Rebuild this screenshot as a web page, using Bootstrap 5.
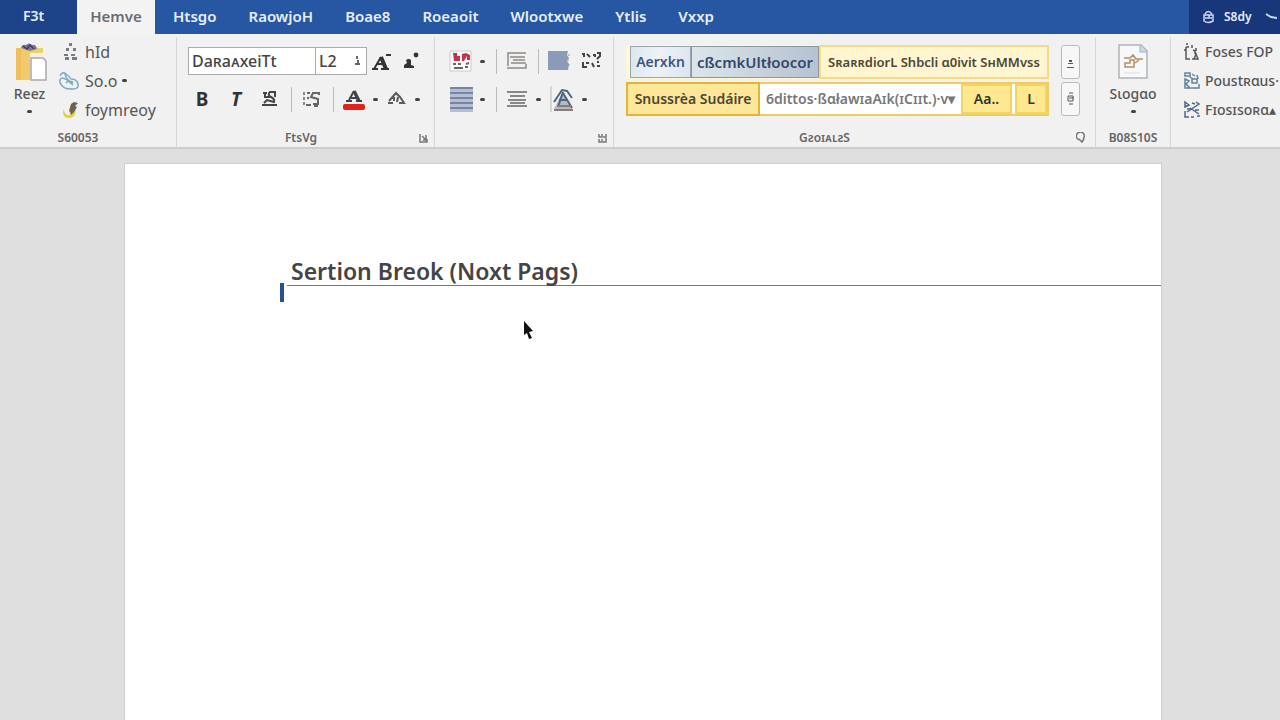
<!DOCTYPE html>
<html lang="en">
<head>
<meta charset="utf-8">
<meta name="viewport" content="width=device-width, initial-scale=1">
<title>Document editor</title>
<link href="https://cdn.jsdelivr.net/npm/bootstrap@5.3.0/dist/css/bootstrap.min.css" rel="stylesheet">
<style>
  body { font-family: "Noto Sans", "Open Sans", sans-serif; font-size: 14px; line-height: 20px; color: #555; background: #dfdfdf; }
  button { font: inherit; color: inherit; background: none; border: 0; padding: 0; white-space: nowrap; }
  svg { display: block; flex: none; }
  .tab-bar { background: #2757a3; height: 34px; color: #e6eefb; font-weight: 600; }
  .tab-item { padding: 0 16px; height: 34px; font-size: 15px; line-height: 32px; color: inherit; text-decoration: none; white-space: nowrap; }
  .tab-file { background: #1d4488; width: 77px; padding-left: 23px; font-size: 14px; }
  .tab-home { background: #f3f3f3; color: #686c75; width: 78px; padding: 0; text-align: center; margin-right: 2px; }
  .account { background: #18377b; width: 91px; padding: 0 13px; gap: 9px; font-size: 12px; }
  .ribbon { background: #f1f1f1; height: 115px; border-bottom: 2px solid #cdcdcd; }
  .tool-group { flex: none; border-right: 1px solid #d6d6d6; margin: 3px 0 0; }
  .group-body { height: 92px; }
  .group-tools { padding-top: 5px; }
  .group-name { font-size: 12px; font-weight: 600; line-height: 18px; color: #666; text-align: center; }
  .group-name span { flex: 1; }
  .launcher { width: 20px; height: 18px; display: flex; align-items: center; justify-content: center; }
  .g-clip { width: 177px; }
  .g-font { width: 258px; padding-left: 11px; }
  .g-para { width: 179px; padding-left: 12px; }
  .g-styles { flex: 1; min-width: 482px; padding-left: 12px; }
  .g-source { width: 75px; }
  .g-edit { width: 109px; padding-left: 12px; overflow: hidden; border: 0; }
  .big-tool { display: flex; flex-direction: column; align-items: center; align-self: flex-start; padding-top: 5px; line-height: 24px; font-weight: 500; }
  .g-clip .big-tool { width: 59px; }
  .line-tool { display: flex; align-items: center; height: 29px; gap: 5px; font-size: 16px; }
  .g-edit .line-tool { font-size: 14px; font-weight: 500; gap: 4px; }
  .tool-row { height: 38px; display: flex; align-items: center; }
  .tool { width: 28px; height: 28px; display: flex; align-items: center; justify-content: center; font-size: 19px; color: #333; }
  .more { width: 14px; height: 28px; display: flex; align-items: center; justify-content: center; }
  .more::before, .drop::before { content: ""; width: 5px; height: 3px; border-radius: 2px; background: #444; }
  .rule-v { width: 14px; height: 25px; display: flex; justify-content: center; }
  .rule-v::before { content: ""; width: 1px; background: #bbb; }
  .combo { border: 1px solid #aaa; background: #fff; height: 28px; width: 179px; }
  .combo input { border: 0; background: none; outline: 0; padding: 0 3px; color: #444; min-width: 0; height: 26px; font-size: 16px; font-weight: 500; }
  .combo .font-name { width: 127px; border-right: 1px solid #aaa; }
  .combo .font-size { width: 38px; }
  .gallery { flex: 1; min-width: 423px; color: #4c4636; font-weight: 600; }
  .gallery-row { height: 34px; background: #fff7d5; }
  .gallery-row button { overflow: hidden; }
  .style-blue { border: 1px solid #98a5af; background: linear-gradient(100deg, #dce6ef, #eef2f7 45%, #dce4f0); color: #40577c; width: 61px; height: 32px; }
  .style-slate { border: 1px solid #8b979e; background: linear-gradient(90deg, #dce5ea, #b6c2d1); color: #34486a; width: 128px; height: 32px; font-size: 15px; }
  .style-cream { flex: 1; height: 34px; border: 2px solid #f3db88; background: #fff5cf; }
  .gallery-row .style-cream { font-size: 13px; }
  .gallery-low { border: 2px solid #efcd65; background: #fff; gap: 3px; }
  .style-gold { border: 2px solid #e2b633; background: #ffe79a; }
  .style-active { width: 134px; height: 34px; margin: -2px 0 -2px -2px; }
  .style-white { flex: 1; color: #777; }
  .style-letter { width: 51px; border: 2px solid #f4d35f; background: #ffe890; color: #333; }
  .style-narrow { width: 32px; }
  .scroll-btn { width: 19px; height: 34px; border: 1px solid #bbb; border-radius: 3px; background: #f7f7f7; display: flex; align-items: center; justify-content: center; }
  .workspace { padding: 14px 118px 0 124px; height: calc(100vh - 149px); overflow: hidden; }
  .sheet { background: #fff; border: 1px solid #cfcfcf; border-bottom: 0; min-height: 100%; padding: 93px 0 0 162px; }
  .break-line { border-bottom: 1px solid #777; padding-left: 4px; height: 29px; }
  .break-line h1 { font-size: 23px; line-height: 29px; font-weight: 600; color: #444; margin: 0; }
  .caret { position: absolute; left: -7px; top: 26px; width: 4px; height: 19px; background: #24538f; }
  .pointer { position: absolute; left: 236px; top: 64px; }
</style>
<script src="https://cdn.jsdelivr.net/npm/bootstrap@5.3.0/dist/js/bootstrap.bundle.min.js"></script>
</head>
<body class="overflow-hidden">
<nav class="tab-bar d-flex" aria-label="Ribbon tabs">
  <a class="tab-item tab-file" href="#">F3t</a>
  <a class="tab-item tab-home" href="#" aria-current="page">Hemve</a>
  <a class="tab-item" href="#">Htsgo</a>
  <a class="tab-item" href="#">RaowjoH</a>
  <a class="tab-item" href="#">Boae8</a>
  <a class="tab-item" href="#">Roeaoit</a>
  <a class="tab-item" href="#">Wlootxwe</a>
  <a class="tab-item" href="#">Ytlis</a>
  <a class="tab-item" href="#">Vxxp</a>
  <button class="account d-flex align-items-center ms-auto overflow-hidden">
    <svg width="13" height="14" viewBox="0 0 13 14" fill="none" stroke="#c9d8f2" stroke-width="1.5"><path d="M3 4Q6 -1 10 4M2 5v6q4 3 9 0V5zM3 8h7M7 5v3"/></svg>
    <span>S8dy</span>
    <svg width="16" height="8" viewBox="0 0 16 8" fill="none" stroke="#c9d8f2" stroke-width="2"><path d="M5 1l5 3 6 1"/></svg>
  </button>
</nav>

<header class="ribbon d-flex">
  <section class="tool-group g-clip">
    <div class="group-body d-flex">
      <button class="big-tool">
        <svg width="34" height="40" viewBox="0 0 34 40"><path d="M3 4h28v35H3z" fill="#f6f1df"/><path d="M3 6h14v32H3z" fill="#f3ca6b"/><path d="M3 6h5v32H3z" fill="#eebf5b"/><path d="M16 6h14v5H16z" fill="#e6d36c"/><path d="M8 6q1-4 5-3 3-3 6 0 4-1 5 4l-7 2z" fill="#7d7890"/><path d="M10 4l4 3 3-4 4 4" stroke="#394263" stroke-width="1.5" fill="none"/><path d="M18 16h12l3 3v19H18z" fill="#fff" stroke="#a9a9ae" stroke-width="1.5"/></svg>
        <span>Reez</span><span class="drop d-flex mt-1"></span>
      </button>
      <div>
        <button class="line-tool">
          <svg width="21" height="20" viewBox="0 0 21 20" fill="#777b84"><path d="M10 1h3v3h-3zM7 6h3v3H7zM14 6h3v3h-3zM5 12h4v2H5zM12 12h4v2h-4zM6 15h4v3H6zM13 15h5v3h-5z"/></svg>
          <span>hId</span>
        </button>
        <button class="line-tool">
          <svg width="21" height="20" viewBox="0 0 21 20" fill="none" stroke="#7faac1" stroke-width="1.5"><path d="M1 5q2-5 6-2t5 5q6 0 7 5t-5 5-8-1q-6-4-5-8t7 0l6 5M6 3q1 6 8 9M7 12q2-3 7-1"/></svg>
          <span>So.o</span><span class="drop d-flex"></span>
        </button>
        <button class="line-tool">
          <svg width="21" height="20" viewBox="0 0 21 20"><path d="M5 9q0 6 5 6 4-1 5-6l2 2q-1 7-7 7-6 0-6-6z" fill="#ded342"/><path d="M10 11l2-7 3-2 4 1-3 3 2 1-3 5-3 3-1-3z" fill="#6e6254"/></svg>
          <span>foymreoy</span>
        </button>
      </div>
    </div>
    <div class="group-name d-flex"><span>S60053</span><i class="launcher"></i></div>
  </section>

  <section class="tool-group g-font">
    <div class="group-body group-tools">
      <div class="tool-row">
        <div class="combo d-flex">
          <input class="font-name" aria-label="Font" value="DaʀaᴀxeiTt">
          <input class="font-size" aria-label="Font size" value="L2">
          <button aria-label="Choose size"><svg width="7" height="12" viewBox="0 0 7 12" fill="#666"><path d="M2 1h2v3H2zM1 8h5v2H1zM3 5h2v4H3z"/></svg></button>
        </div>
        <button class="tool" aria-label="Grow font"><svg width="22" height="24" viewBox="0 0 22 24" fill="none" stroke="#333"><path d="M2 20h6M11 20h8" stroke-width="2"/><path d="M4 20L11 8M7 15h7" stroke-width="2"/><path d="M11 8l5 12" stroke-width="4"/><path d="M16 6h5" stroke-width="2"/></svg></button>
        <button class="tool" aria-label="Shrink font"><svg width="22" height="24" viewBox="0 0 22 24" fill="#333"><path d="M8 11q3-2 5 0v5l3 1v2H6v-3l3-2z"/><circle cx="18" cy="6" r="2.4"/></svg></button>
      </div>
      <div class="tool-row">
        <div class="d-flex" style="gap:6px">
          <button class="tool fw-bold">B</button><button class="tool fst-italic fw-bold">T</button>
          <button class="tool" aria-label="Strikethrough"><svg width="18" height="20" viewBox="0 0 18 20" fill="none" stroke="#444" stroke-width="2"><path d="M2 4h4M4 4v4h5M14 8V3H9q-3 3 1 5t3 5l-7-2-3 3M1 16h15"/></svg></button>
        </div>
        <i class="rule-v"></i>
        <button class="tool" aria-label="Text effects"><svg width="20" height="20" viewBox="0 0 20 20" fill="none" stroke="#666" stroke-width="1.5"><path d="M2 3v14" stroke-dasharray="3 2"/><path d="M5 4h3M16 4h-5l-2 4 7 2v5h-5M17 3v3M5 9h2M4 16h5M12 17h4" stroke-width="2"/></svg></button>
        <i class="rule-v"></i>
        <button class="tool" aria-label="Font color"><svg width="24" height="26" viewBox="0 0 24 26"><path d="M4 15h6M14 15h6M7 14l5-9M9 12h7" stroke="#444" stroke-width="2"/><path d="M12 5l5 10" stroke="#444" stroke-width="3.5"/><rect x="1" y="18" width="22" height="6" rx="2" fill="#e3221b"/></svg></button>
        <button class="more" aria-label="More colors"></button>
        <button class="tool" aria-label="Highlight"><svg width="20" height="20" viewBox="0 0 20 20" fill="none" stroke="#5c5c5c" stroke-width="2"><path d="M2 14h5M3 12l7-8 4 4 4 6h-5M8 8v4M12 8l-1 5"/></svg></button>
        <button class="more" aria-label="More highlights"></button>
      </div>
    </div>
    <div class="group-name d-flex"><span>FtsVg</span><button class="launcher" aria-label="Font options"><svg width="10" height="11" viewBox="0 0 10 11" fill="none" stroke="#777" stroke-width="1.5"><path d="M1 1v8h7V6M3 3l4 4V2M4 7h3"/></svg></button></div>
  </section>

  <section class="tool-group g-para">
    <div class="group-body group-tools">
      <div class="tool-row">
        <button class="tool" aria-label="Bullets"><svg width="24" height="22" viewBox="0 0 24 22"><path d="M1 1h21v20H1z" fill="#fafafa" stroke="#ccc"/><path d="M4 3h4v3h3v5H5zM13 4l4-1 4 2v5h-3V6l-3 5h-2z" fill="#c6324c"/><path d="M4 14h3M9 14h3M5 18h9M17 14l3-1M16 17h3" stroke="#666" stroke-width="2"/></svg></button>
        <button class="more" aria-label="More bullets"></button><i class="rule-v"></i>
        <button class="tool" aria-label="Line spacing"><svg width="22" height="20" viewBox="0 0 22 20" fill="none" stroke="#8d8986" stroke-width="1.5"><path d="M20 2H2v13M4 6h15M7 9h12M5 12h15M1 17h19v-4"/></svg></button>
        <i class="rule-v"></i>
        <button class="tool" aria-label="Shading"><svg width="24" height="22" viewBox="0 0 24 22"><path d="M1 1h20l-1 4 2 3-2 3 2 3-1 6H1z" fill="#8b9ab6"/><path d="M21 5h2M20 10h2M21 15h2" stroke="#8b9ab6"/></svg></button>
        <button class="tool ms-1" aria-label="Show marks"><svg width="20" height="20" viewBox="0 0 20 20" fill="none" stroke="#444" stroke-width="2"><path d="M1 3h2v3M6 3l3 3M12 4h2v2M16 2h3v3l-3 3M2 11v5h4M5 12h3M11 12l2 4M16 15h3M17 10v2"/></svg></button>
      </div>
      <div class="tool-row">
        <button class="tool" aria-label="Justify"><svg width="25" height="27" viewBox="0 0 25 27"><path d="M1 1h23v25H1z" fill="#b4bfd4"/><path d="M1 2h23M1 7h23M1 12h23M1 17h23M1 22h23" stroke="#7885a0" stroke-width="2"/></svg></button>
        <button class="more" aria-label="More alignment"></button><i class="rule-v"></i>
        <button class="tool" aria-label="Center"><svg width="22" height="18" viewBox="0 0 22 18" stroke="#888" stroke-width="2"><path d="M1 2h20M4 6h15M2 10h18M4 13h15M1 16h20"/></svg></button>
        <button class="more" aria-label="More spacing"></button>
        <button class="tool ms-1" aria-label="Borders"><svg width="26" height="26" viewBox="0 0 26 26"><path d="M1 0v26" stroke="#bbb"/><path d="M4 23L13 5l9 18z" fill="#aebccc"/><path d="M4 16l8-12 5 1 5 7M13 6l-5 15M13 7l9 15M9 14h9" fill="none" stroke="#52667e" stroke-width="2"/><path d="M4 24h19M7 20h14" stroke="#8a7c71" stroke-width="2"/></svg></button>
        <button class="more" aria-label="More borders"></button>
      </div>
    </div>
    <div class="group-name d-flex"><span></span><button class="launcher" aria-label="Paragraph options"><svg width="10" height="11" viewBox="0 0 10 11" fill="none" stroke="#777" stroke-width="1.5"><path d="M1 1v3h3V1M8 1v3H5M1 6v3h7V5M4 6v2"/></svg></button></div>
  </section>

  <section class="tool-group g-styles">
    <div class="group-body d-flex pt-2">
      <div class="gallery d-flex flex-column" style="gap:3px">
        <div class="gallery-row d-flex align-items-center">
          <button class="style-blue ms-1">Aerxkn</button>
          <button class="style-slate">cßcmkUltłoocor</button>
          <button class="style-cream">SʀaʀʀdiorL Shbcli ɑ0ivit SʜMMvss</button>
        </div>
        <div class="gallery-row gallery-low d-flex">
          <button class="style-gold style-active">Snussrèa Sudáire</button>
          <button class="style-white">6dittos·ßɑławɪaAɪk(ɪCɪɪt.)·v▾</button>
          <button class="style-letter">Aa..</button>
          <button class="style-letter style-narrow">L</button>
        </div>
      </div>
      <div class="d-flex flex-column ms-2 me-3 ps-1" style="gap:3px">
        <button class="scroll-btn" aria-label="Previous styles"><svg width="9" height="16" viewBox="0 0 9 16" fill="#555"><path d="M2 9h5v1H2zM3 6h3v2H3zM1 13h7v1H1z"/></svg></button>
        <button class="scroll-btn" aria-label="All styles"><svg width="9" height="16" viewBox="0 0 9 16" fill="none" stroke="#555"><path d="M3 2h4M2 5h5v5H2zM3 7h5M3 13h4"/></svg></button>
      </div>
    </div>
    <div class="group-name d-flex"><span class="pe-5">GꙅoɪᴀʟꙅS</span><button class="launcher me-1" aria-label="Style options"><svg width="11" height="12" viewBox="0 0 11 12" fill="none" stroke="#777" stroke-width="1.5"><path d="M4 8a4 4 0 1 1 3-1M3 7l3 3 2-3"/></svg></button></div>
  </section>

  <section class="tool-group g-source">
    <div class="group-body">
      <button class="big-tool w-100">
        <svg width="30" height="40" viewBox="0 0 30 40"><path d="M1 3h22l6 6v27H1z" fill="#f7f8fa" stroke="#aeb4bb" stroke-width="1.5"/><path d="M22 3v7h7" fill="#cbd9e8" stroke="#9cb0c4"/><path d="M6 16h6l3-3 3 4h7M7 21h5v-3h4v7H7zM17 21l4-3" stroke="#b78e69" fill="none" stroke-width="1.5"/><path d="M6 31h16" stroke="#ddd"/></svg>
        <span>Sɩoɡɑo</span><span class="drop d-flex mt-1"></span>
      </button>
    </div>
    <div class="group-name">B08S10S</div>
  </section>

  <section class="tool-group g-edit">
    <div class="group-body">
      <button class="line-tool">
        <svg width="18" height="20" viewBox="0 0 18 20" fill="none" stroke="#555" stroke-width="1.5"><path d="M4 1v2M3 5h3M3 5v12h4M1 8h2M9 3v3M10 8l2 1v3M9 17h6l-2-5-2 5M13 6v3"/></svg><span>Foses FOP</span>
      </button>
      <button class="line-tool">
        <svg width="18" height="20" viewBox="0 0 18 20" fill="none" stroke="#63829a" stroke-width="1.5"><path d="M2 2h5v3H2zM9 3l3 2M2 8l4 2-3 3 4 4H2zM9 8h5v4H9zM8 17h8v-4M14 4l1 4M7 6l3 2"/></svg><span>Poustʀɑus·</span>
      </button>
      <button class="line-tool">
        <svg width="18" height="20" viewBox="0 0 18 20" fill="none" stroke="#4e6785" stroke-width="1.5"><path d="M2 2l4 3-4 2zM13 2l3 2-12 8M7 8l9 6M2 11v6h4M9 3l3 1M8 17h3M14 16h3M4 9h3M12 10h4"/></svg><span>Fɪosɪsoʀɑ▴</span>
      </button>
    </div>
  </section>
</header>

<main class="workspace">
  <article class="sheet">
    <div class="break-line position-relative">
      <h1>Sertion Breok (Noxt Pags)</h1>
      <i class="caret"></i>
      <svg class="pointer" width="12" height="19" viewBox="0 0 12 19"><path d="M1 0l9 10-4 1 3 6-3 1-2-6-3 2z" fill="#111"/></svg>
    </div>
  </article>
</main>
</body>
</html>
